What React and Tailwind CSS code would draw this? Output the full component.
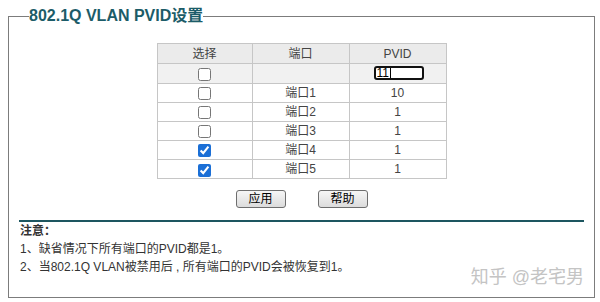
import React from "react";

const ports = [
  { name: "端口1", pvid: 10, checked: false },
  { name: "端口2", pvid: 1, checked: false },
  { name: "端口3", pvid: 1, checked: false },
  { name: "端口4", pvid: 1, checked: true },
  { name: "端口5", pvid: 1, checked: true },
];

const cell = "border border-[#c6c6c6] text-center align-middle p-0";

const Check = ({ checked }) => (
  <input
    type="checkbox"
    defaultChecked={checked}
    className="m-0 align-middle w-[13px] h-[13px] accent-[#1b6fd6]"
  />
);

const Btn = ({ children }) => (
  <button className="w-[50px] h-[18px] border border-[#6e6e6e] rounded-[3px] bg-gradient-to-b from-[#f6f6f6] to-[#dcdcdc] text-[12px] leading-[16px] text-black">
    {children}
  </button>
);

export default function App() {
  return (
    <div
      className="w-[600px] h-[302px] bg-white overflow-hidden"
      style={{ fontFamily: '"Liberation Sans", "Noto Sans CJK SC", sans-serif' }}
    >
      <fieldset className="relative ml-2 mt-[6px] w-[587px] h-[292px] border border-[#7c7c7c] px-[10px]">
        <legend className="ml-[10px] px-0 text-[16px] leading-[20px] font-bold text-[#1c5c68]">
          802.1Q VLAN PVID设置
        </legend>

        <table className="mx-auto mt-[17px] border-collapse text-[12px] text-[#444]">
          <thead>
            <tr className="h-[20px] bg-[#ebebeb]">
              <th className={`${cell} w-[95px] font-normal`}>选择</th>
              <th className={`${cell} w-[97px] font-normal`}>端口</th>
              <th className={`${cell} w-[97px] font-normal`}>PVID</th>
            </tr>
          </thead>
          <tbody>
            <tr className="h-[19.5px] bg-[#f1f1f1]">
              <td className={cell}>
                <Check checked={false} />
              </td>
              <td className={cell}></td>
              <td className={cell}>
                <div className="ml-[24px] flex items-center overflow-hidden w-[50px] h-[14px] border-2 border-[#111] rounded-[3px] bg-white text-[12px] leading-[12px] text-black pl-[1px]">
                  <span>11</span>
                  <span className="inline-block w-[1px] h-[10px] bg-black ml-[1px]" />
                </div>
              </td>
            </tr>
            {ports.map((p) => (
              <tr key={p.name} className="h-[19.2px] bg-white">
                <td className={cell}>
                  <Check checked={p.checked} />
                </td>
                <td className={cell}>{p.name}</td>
                <td className={cell}>{p.pvid}</td>
              </tr>
            ))}
          </tbody>
        </table>

        <div className="flex justify-center gap-[32px] mt-[11px]">
          <Btn>应用</Btn>
          <Btn>帮助</Btn>
        </div>

        <div className="mt-[12px] h-[2px] bg-[#1d5660]" />

        <div className="pl-[1px] text-[12px] leading-[18px] text-[#333]">
          <div className="font-bold">注意：</div>
          <div>1、缺省情况下所有端口的PVID都是1。</div>
          <div>2、当802.1Q VLAN被禁用后 , 所有端口的PVID会被恢复到1。</div>
        </div>

        <div className="absolute right-[10px] bottom-[9px] text-[18px] leading-[22px] text-[#c4c4c4]">
          知乎 @老宅男
        </div>
      </fieldset>
    </div>
  );
}
